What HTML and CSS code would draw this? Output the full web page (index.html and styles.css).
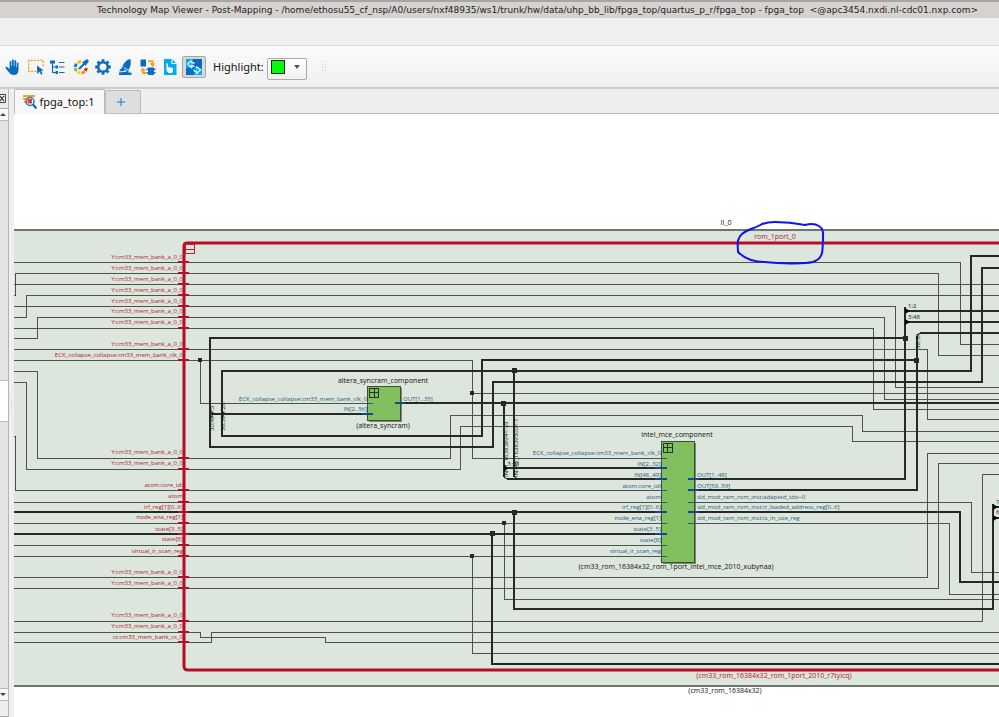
FILE: index.html
```html
<!DOCTYPE html>
<html lang="en">
<head>
<meta charset="utf-8">
<title>Technology Map Viewer - Post-Mapping</title>
<link rel="stylesheet" href="styles.css">
</head>
<body>
<header class="titlebar"><h1>Technology Map Viewer - Post-Mapping - /home/ethosu55_cf_nsp/A0/users/nxf48935/ws1/trunk/hw/data/uhp_bb_lib/fpga_top/quartus_p_r/fpga_top - fpga_top&nbsp; &lt;@apc3454.nxdi.nl-cdc01.nxp.com&gt;</h1></header>
<nav class="menubar"></nav>
<div class="toolbar">
  <div class="tools">
    <button class="tool" aria-label="Pan"><svg viewBox="0 0 16 16"><path fill="#0a6cc0" d="M4.600 9V3c0-1.400 1.700-1.400 1.700 0v4h.6V1.500c0-1.500 1.900-1.500 1.900 0V7h.6V2.200c0-1.400 1.800-1.400 1.800 0V8h.6V4.500c0-1.400 1.700-1.400 1.700 0V11c0 3-1.600 5-4.600 5-2.600 0-3.900-1-5.200-3L.6 9.200C0 8 1.200 7.400 2.100 8.100L4.600 10z"/></svg></button>
    <button class="tool" aria-label="Select area"><svg viewBox="0 0 16 16"><path fill="none" stroke="#f9a11b" stroke-width="1.300" stroke-dasharray="2.200 1.200" d="M8.500 12.300H.7V1.300h14.600v6"/><path fill="#0a6cc0" d="M9 6.500l6.600 5-2.600.4 1.600 3-1.500.8-1.600-3L9.200 15z"/></svg></button>
    <button class="tool" aria-label="Hierarchy"><svg viewBox="0 0 16 16"><path fill="none" stroke="#0a6cc0" stroke-width="1.200" d="M2.500 3v10.500H6M2.500 8H6M9 3.500h5.500M9 8h5.500M9 13.500h5.500"/><path fill="#0a6cc0" d="M0 1.500h5v3H0zM5.500 6.500h2.500v3H5.500zM5.500 12h2.500v3H5.500z"/></svg></button>
    <button class="tool" aria-label="Colours"><svg viewBox="0 0 16 16"><g fill="none" stroke-width="3"><path stroke="#fbb51c" d="M8 2.800a5.600 5.600 0 0 0-3.500 1.100"/><path stroke="#1a78c8" d="M3.600 4.800A5.600 5.600 0 0 0 2.300 8"/><path stroke="#7cc142" d="M2.300 9a5.600 5.600 0 0 0 1.400 3.100"/><path stroke="#fbd01c" d="M4.500 12.900a5.600 5.600 0 0 0 3.100 1.200"/><path stroke="#f58220" d="M8.600 14a5.600 5.600 0 0 0 3-1.500"/><path stroke="#e2231a" d="M12.200 11.800A5.600 5.600 0 0 0 13.300 9"/></g><path stroke="#0a6cc0" stroke-width="2.200" d="M6 10l6-6"/><path fill="#0a6cc0" d="M10.500 2.500L14 0l2 2-2.500 3.500-.7 1.500L9 3.200z"/></svg></button>
    <button class="tool" aria-label="Settings"><svg viewBox="0 0 16 16"><circle cx="8" cy="8" r="4.800" fill="none" stroke="#0a6cc0" stroke-width="2.600"/><path stroke="#0a6cc0" stroke-width="2.800" d="M8 .2v2.500M8 13.300v2.500M.2 8h2.500M13.300 8h2.500M2.500 2.500l1.700 1.700M11.800 11.800l1.700 1.700M2.500 13.500l1.700-1.700M11.800 4.200l1.700-1.700"/></svg></button>
    <button class="tool" aria-label="Bird's eye view"><svg viewBox="0 0 16 16"><path fill="#0a6cc0" d="M13.500 0C9 1 6.500 4 5.500 8L2 12c2.500.8 4.500.2 6-1.200l2 1.700L2 13.500V16h12.500v-2.500H13L11.500 10.500C14 8 14 4 13.500 0z"/><path stroke="#fff" stroke-width=".8" fill="none" d="M7 8.500l4 2.500 1.500 3"/></svg></button>
    <button class="tool" aria-label="Swap"><svg viewBox="0 0 16 16"><path fill="#0a6cc0" d="M.5.500h5.500v7H.5zM8 8.500h6V16H8zM6.500 9.500h9V11h-9zM6.500 13h9v1.500h-9z"/><path fill="none" stroke="#f9a11b" stroke-width="1.800" d="M8 2.200h4.500V5M6 14H3v-3"/><path fill="#f9a11b" d="M9.500 4.200h6L12.500 8zM0 12l3-3.500L6 12z"/></svg></button>
    <button class="tool" aria-label="Page"><svg viewBox="0 0 16 16"><path fill="#00aeef" d="M2 0h8l4.500 4.500V16H2z"/><path fill="#fff" d="M9.500 0v5h5V4h-4V0zM4.500 5c0-1 1.500-1 1.500 0v3l5 1v3.500L10 14H6.500l-2-2.500z"/></svg></button>
    <button class="tool tool-on" aria-label="Link views"><svg viewBox="0 0 16 16"><path fill="#00aeef" d="M0 0h16v16H0z"/><path fill="#0a6cc0" d="M7 0h9v9H7zM0 9h8v7H0z"/><path fill="none" stroke="#e4f4ff" stroke-width="1.300" d="M5.500 1.500L1.500 5l4 3.500V6.500C7 6.500 8 7 8.500 8M5.500 1.500v2C7 3.500 8 4 8.500 4.500M10.500 7.500l4 3.500-4 3.500v-2C9 12.500 8 12 7.500 11M10.500 7.500v2"/></svg></button>
  </div>
  <label class="hl-label" for="hl">Highlight:</label>
  <span class="combo"><select id="hl"><option>&#8203;</option></select><i class="swatch"></i><i class="caret"></i></span>
  <i class="grip"></i>
</div>
<main class="main">
  <aside class="side">
    <div class="side-head"><button class="close" aria-label="Close"><svg viewBox="0 0 9 9"><path fill="none" stroke="#444" stroke-width="1" d="M-3 .5H5.500V8.500H-3"/><path stroke="#333" stroke-width="1.200" d="M0 2l4 5M4 2L0 7"/></svg></button></div>
    <div class="arrow"><i class="up"></i></div>
    <div class="track"><div class="thumb"></div></div>
    <div class="arrow"><i class="down"></i></div>
    <div class="side-foot"></div>
  </aside>
  <div class="splitter"><i class="dots"></i></div>
  <section class="work">
    <div class="tabs">
      <button class="tab tab-on"><svg class="tab-icon" viewBox="0 0 14 14"><path fill="#f9a11b" d="M0 0h12v2H0zM0 3h4v2H0zM1 6h3v2H1z"/><circle cx="7" cy="6.500" r="4" fill="#fff" stroke="#1a78c8" stroke-width="1.500"/><path fill="#e8401c" d="M4.500 4h4.500v4.500H4.500z"/><path stroke="#0a5cb0" stroke-width="2" d="M10 9.500l3.500 4"/></svg>fpga_top:1</button>
      <button class="tab tab-add" aria-label="New tab"><svg viewBox="0 0 8 8"><path stroke="#1a78c8" stroke-width="1" d="M4 0v8M0 4h8"/></svg></button>
    </div>
    <div class="canvas">
      <svg class="schematic" viewBox="14 114 985 603" preserveAspectRatio="xMinYMin slice">
        <rect class="outer" x="10" y="230" width="1000" height="456"/>
        <!-- single-bit nets -->
        <path class="thin" d="M14 262H960V344H999M14 295H15V273H938V355H999M14 284H999M14 317H26V295H999M14 306H895V387H999M14 338H37V317H884V399H999M14 328H873V409H999M14 349H927V419H999M14 360H472V458H667M200 360V403H372M472 393H999
          M14 371H37V458H450V415H862V431H999M14 382H26V469H460V426H852V441H999M14 436H15V490H667M14 502H667M14 523H667M14 545H667M14 556H667
          M14 577H927V453H999M14 588H938V463H999M14 621H982V474H999M14 632H200V637H325V642H999M14 642H211V632H999M472 556V653H999M504 523V599H999
          M694 502H971V572H999M694 523H949V594H999"/>
        <!-- buses -->
        <path class="thick" d="M905 338H210V447H493V382H982V268H999M916 360H482V436H222V371H971V256H999M400 403H999M504 403V477M514 371V477M211 414H372M504 468H661M507 479H661
          M14 512H667M14 534H667M492 534V664H999M514 512V609H993V504M694 479H905V307M694 490H917V336M920 333H999M905 311H999M905 322H999M694 512H960V582H999M993 507H999M993 518H999"/>
        <path class="bend" d="M210 409q5 5 0 10M221 409q5 5 0 10M503 475q1 4 5 4M514 475q1 4 5 4M917 337q0-4 4-4"/>
        <path d="M905 308l5 3-5 3zM905 319l5 3-5 3zM993 504l5 3-5 3zM993 515l5 3-5 3zM504 465l4 3-4 4z"/>
        <path class="node" d="M198 358h4v4h-4zM470 391h4v4h-4zM501 401h5v5h-5zM512 368h5v5h-5zM903 336h5v5h-5zM914 358h5v5h-5zM512 510h5v5h-5zM502 521h4v4h-4zM490 531h5v5h-5zM470 554h4v4h-4z"/>
        <!-- selected instance boundary -->
        <path class="sel" d="M999 243H187q-3 0-3 3V666q0 4 4 4H999"/>
        <path class="selthin" d="M185 244h9v9h-9zM185 249h9"/>
        <path class="tick" d="M178 262h11M178 273h11M178 284h11M178 295h11M178 306h11M178 317h11M178 328h11M178 349h11M178 360h11M178 458h11M178 469h11M178 490h11M178 502h11M178 512h11M178 523h11M178 534h11M178 545h11M178 556h11M178 577h11M178 588h11M178 621h11M178 632h11M178 642h11"/>
        <g class="port end red">
          <text x="183" y="259">Y:cm33_mem_bank_a_0_0</text><text x="183" y="270">Y:cm33_mem_bank_a_0_0</text><text x="183" y="281">Y:cm33_mem_bank_a_0_0</text><text x="183" y="292">Y:cm33_mem_bank_a_0_0</text><text x="183" y="303">Y:cm33_mem_bank_a_0_0</text><text x="183" y="313">Y:cm33_mem_bank_a_0_0</text><text x="183" y="324">Y:cm33_mem_bank_a_0_0</text><text x="183" y="346">Y:cm33_mem_bank_a_0_0</text><text x="183" y="357">ECK_collapse_collapse:cm33_mem_bank_clk_0</text>
          <text x="183" y="454">Y:cm33_mem_bank_a_0_0</text><text x="183" y="465">Y:cm33_mem_bank_a_0_0</text><text x="183" y="487">atom:core_tdi</text><text x="183" y="498">atom</text><text x="183" y="509">irf_reg[1][0..6]</text><text x="183" y="519">node_ena_reg[1]</text><text x="183" y="531">state[3..5]</text><text x="183" y="541">state[8]</text><text x="183" y="553">virtual_ir_scan_reg</text>
          <text x="183" y="574">Y:cm33_mem_bank_a_0_0</text><text x="183" y="585">Y:cm33_mem_bank_a_0_0</text><text x="183" y="617">Y:cm33_mem_bank_a_0_0</text><text x="183" y="628">Y:cm33_mem_bank_a_0_0</text><text x="183" y="639">cs:cm33_mem_bank_cs_0</text>
        </g>
        <!-- altera_syncram instance -->
        <rect class="shadow" x="369" y="388" width="33" height="34"/><rect class="cell" x="367" y="386" width="33" height="34"/>
        <path class="expand" d="M369 388h9v9h-9zM369 392h9M374 388v9"/>
        <path class="pin" d="M368 403h5"/><path class="pin bus" d="M362 414h11M395 403h10"/>
        <g class="port end blue"><text x="367" y="401">ECK_collapse_collapse:cm33_mem_bank_clk_0</text><text x="367" y="411">IN[2..56]</text></g>
        <text class="port blue" x="403" y="401">OUT[1..35]</text>
        <text class="name" x="383" y="383">altera_syncram_component</text><text class="name" x="383" y="428">(altera_syncram)</text>
        <!-- intel_mce instance -->
        <rect class="shadow" x="663" y="443" width="33" height="121"/><rect class="cell" x="661" y="441" width="33" height="121"/>
        <path class="expand" d="M663 443h9v9h-9zM663 447h9M667 443v9"/>
        <path class="pin" d="M662 458h5M655 490h12M662 502h5M662 523h5M655 545h12M662 556h5M688 502h11M688 523h11"/>
        <path class="pin bus" d="M655 468h12M655 479h12M655 512h12M655 534h12M688 479h11M688 490h11M688 512h11"/>
        <g class="port end blue"><text x="661" y="455">ECK_collapse_collapse:cm33_mem_bank_clk_0</text><text x="661" y="466">IN[2..32]</text><text x="661" y="477">IN[48..49]</text><text x="661" y="488">atom:core_tdi</text><text x="661" y="499">atom</text><text x="661" y="509">irf_reg[1][0..6]</text><text x="661" y="520">node_ena_reg[1]</text><text x="661" y="531">state[3..5]</text><text x="661" y="542">state[8]</text><text x="661" y="553">virtual_ir_scan_reg</text></g>
        <g class="port blue"><text x="697" y="477">OUT[1..48]</text><text x="697" y="488">OUT[58..59]</text><text x="697" y="499">sld_mod_ram_rom_inst:adapted_tdo~0</text><text x="697" y="509">sld_mod_ram_rom_inst:ir_loaded_address_reg[0..6]</text><text x="697" y="520">sld_mod_ram_rom_inst:is_in_use_reg</text></g>
        <text class="name" x="677" y="437">intel_mce_component</text><text class="name" x="676" y="569">(cm33_rom_16384x32_rom_1port_intel_mce_2010_xubynaa)</text>
        <!-- bus range labels -->
        <g class="port range"><text x="908" y="308">1:2</text><text x="908" y="319">3:48</text><text x="996" y="504">1</text><text x="996" y="514">6</text><text x="508" y="466">1:31</text>
          <text transform="translate(214 431) rotate(-90)">30:49 1:5</text><text transform="translate(225 431) rotate(-90)">56:59 1:28</text><text transform="translate(508 477) rotate(-90)">IN~1_16383894&lt;-35</text><text transform="translate(518 477) rotate(-90)">IN~48_163839500&lt;-1</text><text transform="translate(920 349) rotate(-90)">58:59</text></g>
        <text class="name" x="726" y="225">II_0</text><text class="name red" x="775" y="239">rom_1port_0</text>
        <text class="name red" x="774" y="678">(cm33_rom_16384x32_rom_1port_2010_r7tyicq)</text><text class="name" x="725" y="693">(cm33_rom_16384x32)</text>
        <path class="ink" d="M805 225C795 223 783 222 775 222C768 222 765 223 762 224C756 228 746 230 742 234C736 239 738 245 738 252C744 258 753 262 765 262C780 263 800 265 813 262C825 258 822 248 823 240C823 234 824 229 819 226C814 223 809 224 805 225"/>
      </svg>
    </div>
  </section>
</main>
</body>
</html>
```
FILE: styles.css
```css
* { box-sizing: border-box; }
body { margin: 0; height: 100vh; display: flex; flex-direction: column; overflow: hidden; background: #eee; color: #222; font-family: "Noto Sans", sans-serif; }
button { border: 0; padding: 0; background: none; font: inherit; color: inherit; }
.titlebar { flex: none; height: 18px; border-top: 2px solid #a8a6a5; background: #d6d2d0; padding: 0 6px 0 82px; display: flex; justify-content: center; }
.titlebar h1 { margin: 0; font: 9px/16px "DejaVu Sans", sans-serif; color: #222; white-space: nowrap; }
.menubar { flex: none; height: 28px; border-bottom: 1px solid #dcdcdc; background: #efefef; }
.toolbar { flex: none; height: 43px; display: flex; align-items: center; padding: 1px 0 0 2px; background: linear-gradient(#fbfbfb, #f0f0f0); border-bottom: 2px solid #cdcdcd; }
.tools { display: flex; width: 204px; }
.tool { flex: 1; height: 22px; display: flex; align-items: center; justify-content: center; }
.tool svg { width: 16px; height: 16px; }
.tool-on { border: 1px solid #a5a5a5; border-radius: 2px; background: #d8d8d8; }
.hl-label { margin-left: 7px; font-size: 11px; line-height: 16px; color: #111; }
.combo { position: relative; margin-left: 3px; width: 40px; height: 22px; }
.combo select { appearance: none; width: 100%; height: 100%; border: 1px solid #aaa; border-radius: 2px; background: linear-gradient(#fff, #f0f0f0); }
.swatch { position: absolute; left: 4px; top: 4px; width: 14px; height: 14px; border: 1px solid #222; background: #0f0; pointer-events: none; }
.caret { position: absolute; right: 7px; top: 9px; border: 3px solid transparent; border-top: 4px solid #555; border-bottom: 0; pointer-events: none; }
.grip { margin-left: 14px; width: 5px; height: 14px; background: radial-gradient(circle, #ccc 1px, transparent 1px) 0 0 / 3px 3px; }
.main { flex: 1; min-height: 0; display: flex; }
.side { flex: none; width: 9px; display: flex; flex-direction: column; background: #e4e4e4; border-right: 1px solid #b4b4b4; }
.side-head { height: 20px; background: #ececec; border-bottom: 1px solid #aaa; display: flex; align-items: center; }
.close { display: flex; }
.close svg { width: 9px; height: 9px; }
.arrow { height: 12px; background: #f8f8f8; border-bottom: 1px solid #bbb; padding: 4px 0 0; }
.up, .down { display: block; width: 0; border: 3px solid transparent; }
.up { border-top: 0; border-bottom: 3px solid #444; }
.down { border-bottom: 0; border-top: 3px solid #444; }
.track { flex: 1; display: flex; flex-direction: column; border-bottom: 1px solid #bbb; }
.track::before { content: ""; flex: 260; }
.track::after { content: ""; flex: 267; }
.thumb { flex: 41; background: #fdfdfd; border: solid #bbb; border-width: 1px 0; }
.side-foot { height: 16px; background: #eee; border-bottom: 1px solid #aaa; }
.splitter { flex: none; width: 5px; display: flex; align-items: center; justify-content: center; background: #efefef; }
.dots { width: 3px; height: 15px; background: radial-gradient(circle, #ccc 1px, transparent 1px) 0 0 / 3px 3px; }
.work { flex: 1; min-width: 0; display: flex; flex-direction: column; }
.tabs { flex: none; height: 25px; display: flex; align-items: flex-end; border-bottom: 1px solid #bcbcbc; }
.tab { display: flex; align-items: center; justify-content: center; border: 1px solid #bbb; border-bottom: 0; border-radius: 2px 2px 0 0; }
.tab-on { width: 91px; height: 25px; margin-bottom: -1px; padding-right: 2px; gap: 3px; font-size: 11px; line-height: 16px; color: #111; background: #f8f8f8; }
.tab-icon { width: 14px; height: 14px; }
.tab-add { width: 36px; height: 23px; padding-right: 5px; background: #dedede; }
.tab-add svg { width: 8px; height: 8px; }
.canvas { flex: 1; min-height: 0; background: #fff; overflow: hidden; }
.schematic { display: block; width: 100%; height: 100%; }
.schematic text { font-family: "Open Sans", "Noto Sans", sans-serif; }
.outer { fill: #dce6dc; stroke: #6d756d; stroke-width: 2; shape-rendering: crispEdges; }
.thin, .thick, .sel, .selthin, .tick, .expand, .pin { fill: none; shape-rendering: crispEdges; }
.thin { stroke: #4b534b; stroke-width: 1; }
.thick { stroke: #262a26; stroke-width: 2; }
.bend { fill: none; stroke: #222; stroke-width: 1; }
.node { fill: #262a26; }
.sel { stroke: #b80d26; stroke-width: 3; shape-rendering: auto; }
.selthin { stroke: #c02035; stroke-width: 1; }
.tick { stroke: #b80d26; stroke-width: 2; }
.cell { fill: #82bf5f; stroke: #3c5030; stroke-width: 1; shape-rendering: crispEdges; }
.shadow { fill: #7d837d; }
.expand { stroke: #26331e; stroke-width: 1; }
.pin { stroke: #1f6070; stroke-width: 1; }
.bus { stroke: #0f4a90; stroke-width: 2; }
.port { font-size: 6px; }
.range { fill: #111; }
.end { text-anchor: end; }
.name { font-size: 7px; text-anchor: middle; fill: #111; }
.red { fill: #b01830; }
.blue { fill: #1c5c84; }
.ink { fill: none; stroke: #1010f0; stroke-width: 2; stroke-linecap: round; }
```
